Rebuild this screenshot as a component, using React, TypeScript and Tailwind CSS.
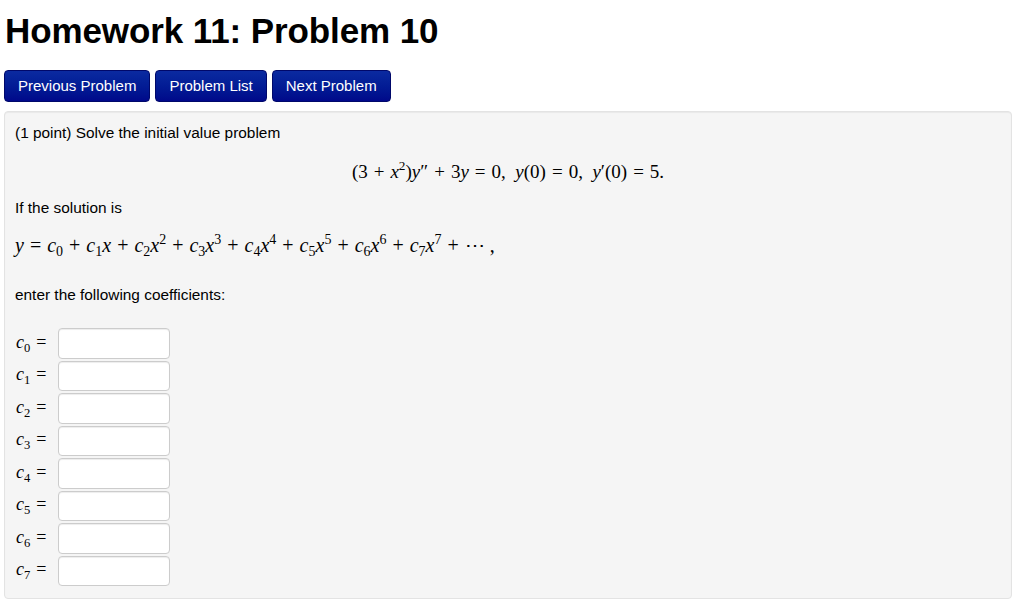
import React from "react";

const serif = "font-['Liberation_Serif','Times_New_Roman',serif]";

function Sub({ n }: { n: number | string }) {
  return <span className="align-[-4px] text-[0.7em] leading-none not-italic">{n}</span>;
}

function Sup({ n }: { n: number | string }) {
  return <span className="align-[8px] text-[0.7em] leading-none not-italic">{n}</span>;
}

function Op({ c }: { c: string }) {
  return <span className="mx-[6px]">{c}</span>;
}

const rows = [0, 1, 2, 3, 4, 5, 6, 7];

export default function App() {
  return (
    <div className="min-h-[603px] bg-white px-1 font-['Liberation_Sans',Arial,sans-serif] text-black">
      <h1 className="pt-[10px] pl-[1px] text-[35px] font-bold leading-[42px] tracking-[-0.1px]">
        Homework 11: Problem 10
      </h1>

      <div className="mt-[18px] flex gap-[5px]">
        {["Previous Problem", "Problem List", "Next Problem"].map((b) => (
          <button
            key={b}
            className="h-[32px] rounded-[4px] border border-[#00086a] bg-gradient-to-b from-[#0b2aa0] to-[#00088a] px-[13px] text-[15px] text-white"
          >
            {b}
          </button>
        ))}
      </div>

      <div className="mt-[9px] w-[1008px] rounded-[4px] border border-[#e3e3e3] bg-[#f5f5f5] px-[10px] pt-[12px] pb-[12px] text-[15.4px] shadow-[inset_0_1px_1px_rgba(0,0,0,0.05)]">
        <p className="leading-[18px]">(1 point) Solve the initial value problem</p>

        <div className={`${serif} mt-[17px] text-center text-[19px] leading-[20px]`}>
          (3<Op c="+" />
          <i>x</i>
          <Sup n={2} />)<i>y</i>″<Op c="+" />3<i>y</i>
          <Op c="=" />0,&nbsp; <i>y</i>(0)<Op c="=" />0,&nbsp; <i>y</i>′(0)<Op c="=" />5.
        </div>

        <p className="mt-[17px] leading-[18px]">If the solution is</p>

        <div className={`${serif} mt-[16px] text-[20px] leading-[22px]`}>
          <i>y</i>
          <Op c="=" />
          <i>c</i>
          <Sub n={0} />
          <Op c="+" />
          <i>c</i>
          <Sub n={1} />
          <i>x</i>
          <Op c="+" />
          <i>c</i>
          <Sub n={2} />
          <i>x</i>
          <Sup n={2} />
          <Op c="+" />
          <i>c</i>
          <Sub n={3} />
          <i>x</i>
          <Sup n={3} />
          <Op c="+" />
          <i>c</i>
          <Sub n={4} />
          <i>x</i>
          <Sup n={4} />
          <Op c="+" />
          <i>c</i>
          <Sub n={5} />
          <i>x</i>
          <Sup n={5} />
          <Op c="+" />
          <i>c</i>
          <Sub n={6} />
          <i>x</i>
          <Sup n={6} />
          <Op c="+" />
          <i>c</i>
          <Sub n={7} />
          <i>x</i>
          <Sup n={7} />
          <Op c="+" />⋯ ,
        </div>

        <p className="mt-[27px] leading-[18px]">enter the following coefficients:</p>

        <div className="mt-[24px] flex flex-col gap-[2px]">
          {rows.map((r) => (
            <div key={r} className="flex items-center">
              <div className={`${serif} w-[43px] pl-[1px] text-[18px] leading-[20px]`}>
                <i>c</i>
                <Sub n={r} />
                <Op c="=" />
              </div>
              <input className="h-[30.5px] w-[112px] rounded-[4px] border border-[#cccccc] bg-white shadow-[inset_0_1px_1px_rgba(0,0,0,0.075)] outline-none" />
            </div>
          ))}
        </div>
      </div>
    </div>
  );
}
